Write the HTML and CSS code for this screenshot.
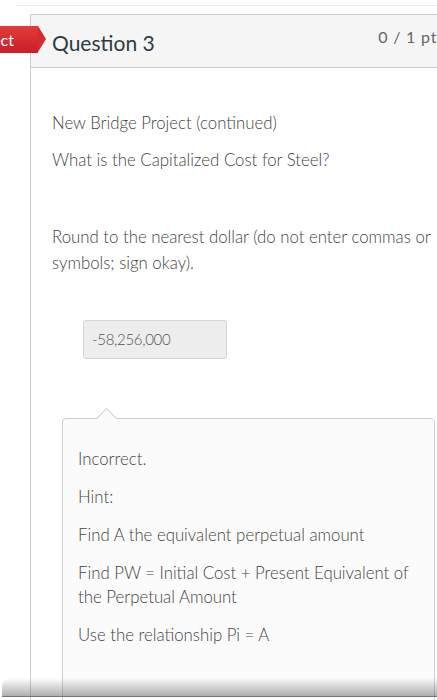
FILE: index.html
```html
<!DOCTYPE html>
<html>
<head>
<meta charset="utf-8">
<link rel="stylesheet" href="styles.css">
</head>
<body>
<div class="topline"></div>
<div class="card">
  <div class="card-header">
    <div class="flag">Incorrect</div>
    <h2 class="title">Question 3</h2>
    <div class="pts">0 / 1 pts</div>
  </div>
  <div class="card-body">
    <p>New Bridge Project (continued)</p>
    <p>What is the Capitalized Cost for Steel?</p>
    <div class="spacer"></div>
    <p>Round to the nearest dollar (do not enter commas or symbols; sign okay).</p>
    <div class="answer">-58,256,000</div>
    <div class="feedback">
      <p>Incorrect.</p>
      <p>Hint:</p>
      <p>Find A the equivalent perpetual amount</p>
      <p>Find PW = Initial Cost + Present Equivalent of the Perpetual Amount</p>
      <p>Use the relationship Pi = A</p>
    </div>
  </div>
</div>
<div class="bottom-shadow"></div>
</body>
</html>
```
FILE: styles.css
```css
html, body {
  margin: 0;
  padding: 0;
  overflow: hidden;
  background: #fff;
}
body {
  font-family: Lato, "Open Sans", sans-serif;
  color: #444;
  width: 437px;
  height: 700px;
}
.topline {
  margin-left: 16px;
  height: 5px;
  border-bottom: 1px solid #ececec;
}
.card {
  margin-top: 8px;
  margin-left: 30px;
  width: 440px;
  border-left: 1px solid #c7cdd1;
  border-top: 1px solid #c7cdd1;
  height: 720px;
}
.card-header {
  position: relative;
  height: 52px;
  background: #f5f5f5;
  border-bottom: 1px solid #c7cdd1;
  display: flex;
  align-items: flex-start;
  justify-content: space-between;
}
.flag {
  position: absolute;
  left: -80px;
  top: 11px;
  width: 87px;
  height: 27px;
  background: linear-gradient(#e33b3b, #c81f2a);
  color: #fff;
  font-size: 16px;
  line-height: 27px;
  text-align: right;
  padding-right: 30px;
  box-sizing: border-box;
  white-space: nowrap;
}
.flag::after {
  content: "";
  position: absolute;
  right: -8px;
  top: 0;
  width: 0;
  height: 0;
  border-top: 13.5px solid transparent;
  border-bottom: 13.5px solid transparent;
  border-left: 8px solid #d42c31;
}
.title {
  margin: 0;
  padding: 16px 0 0 21px;
  font-size: 21px;
  font-weight: 400;
  line-height: 24px;
  color: #2d3b45;
}
.pts {
  padding: 12px 26px 0 0;
  font-size: 16px;
  line-height: 20px;
  color: #666;
  letter-spacing: 0.8px;
  white-space: nowrap;
}
.card-body {
  padding: 42px 0 0 21px;
}
.card-body > p {
  margin: 0 0 11px;
  font-size: 16.8px;
  font-weight: 300;
  line-height: 26px;
  width: 385px;
  color: #444;
}
.spacer {
  height: 40px;
}
.answer {
  margin: 44px 0 0 31px;
  width: 134px;
  height: 37px;
  border: 1px solid #d4d4d4;
  border-radius: 3px;
  background: #ededed;
  font-size: 15px;
  font-weight: 300;
  line-height: 37px;
  padding-left: 8px;
  color: #555;
  letter-spacing: -0.3px;
}
.feedback {
  position: relative;
  margin: 59px 0 0 10px;
  width: 373px;
  height: 320px;
  border: 1px solid #cfcfcf;
  border-radius: 4px;
  background: #fbfbfb;
  padding: 28px 0 0 15px;
  box-sizing: border-box;
}
.feedback::before {
  content: "";
  position: absolute;
  left: 36px;
  top: -8px;
  width: 14px;
  height: 14px;
  background: #fbfbfb;
  border-left: 1px solid #cfcfcf;
  border-top: 1px solid #cfcfcf;
  transform: rotate(45deg);
}
.feedback p {
  margin: 0 0 14px;
  font-size: 16.8px;
  font-weight: 300;
  line-height: 24px;
  color: #444;
  width: 345px;
}
.bottom-shadow {
  position: fixed;
  left: 2px;
  right: 0;
  bottom: 3px;
  height: 18px;
  border-radius: 8px 0 0 0;
  background: linear-gradient(rgba(120,120,120,0), rgba(110,110,110,0.55));
  border-bottom: 1px solid #777;
}
```
